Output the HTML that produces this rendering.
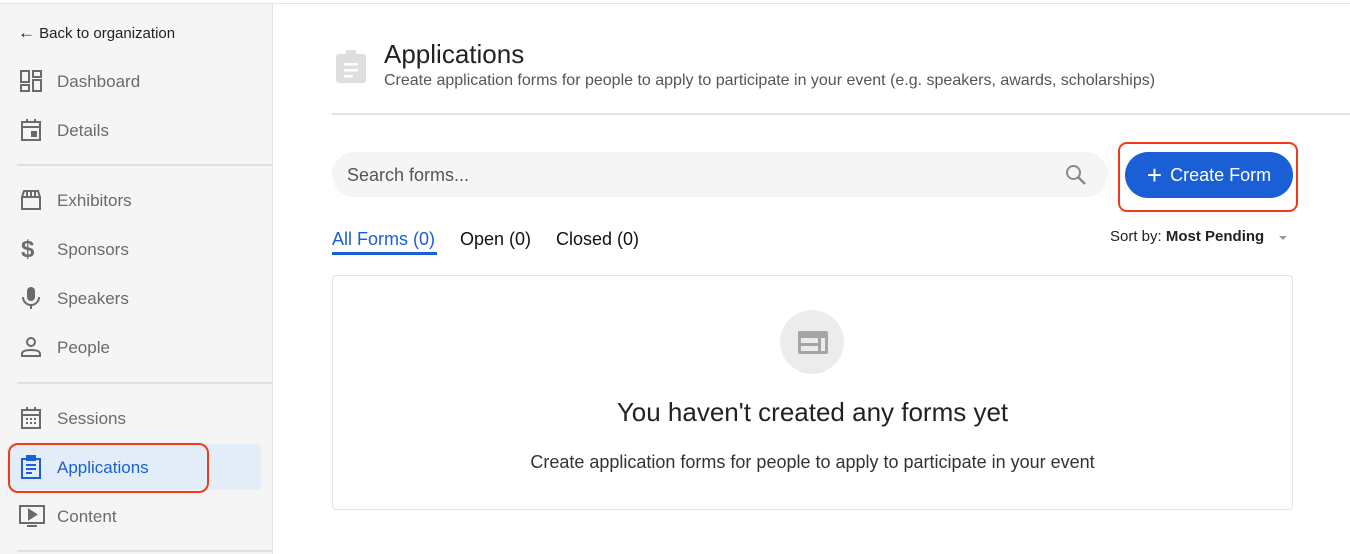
<!DOCTYPE html>
<html><head><style>
*{box-sizing:border-box;margin:0;padding:0}
body{width:1350px;height:554px;overflow:hidden;background:#fff;font-family:"Liberation Sans",sans-serif;position:relative}
.abs{position:absolute}
.side{left:0;top:4px;width:273px;height:550px;background:#f5f5f5;border-right:1px solid #e2e2e2}
.item{position:absolute;left:57px;font-size:17px;color:#6b6b6b;transform:translateY(-50%);margin-top:1px}
.ic{position:absolute;left:19px;width:24px;height:24px;transform:translateY(-50%)}
.div{position:absolute;left:17px;width:256px;height:2px;background:#e0e0e0}
</style></head><body>
<div class="abs" style="left:0;top:0;width:1350px;height:4px;border-bottom:1px solid #e6e6e6;background:#fff"></div>
<div class="abs side"></div>
<div class="abs" style="left:18px;top:23px;font-size:15px;color:#222"><span style="font-size:17px">←</span> Back to organization</div>

<svg class="ic" style="top:81px" viewBox="0 0 24 24" fill="none" stroke="#6b6b6b" stroke-width="2"><rect x="2" y="2" width="8" height="11"/><rect x="2" y="16" width="8" height="6"/><rect x="14" y="2" width="8" height="6"/><rect x="14" y="11" width="8" height="11"/></svg>
<div class="item" style="top:81px">Dashboard</div>
<svg class="ic" style="top:130px" viewBox="0 0 24 24" fill="none" stroke="#6b6b6b" stroke-width="2"><rect x="3" y="4" width="18" height="18"/><line x1="3" y1="9" x2="21" y2="9"/><line x1="8" y1="1" x2="8" y2="5"/><line x1="16" y1="1" x2="16" y2="5"/><rect x="13" y="14" width="4" height="4" fill="#6b6b6b"/></svg>
<div class="item" style="top:130px">Details</div>
<div class="div" style="top:164px"></div>
<svg class="ic" style="top:200px" viewBox="0 0 24 24" fill="none" stroke="#6b6b6b" stroke-width="2"><path d="M3 9 L5 3 H19 L21 9 V21 H3 Z M3 9 H21 M8 3 V9 M12 3 V9 M16 3 V9"/></svg>
<div class="item" style="top:200px">Exhibitors</div>
<div class="abs" style="left:21px;top:250px;transform:translateY(-50%);font-size:24px;color:#6b6b6b;font-weight:bold">$</div>
<div class="item" style="top:249px">Sponsors</div>
<svg class="ic" style="top:298px" viewBox="0 0 24 24" fill="#6b6b6b"><rect x="8" y="1" width="8" height="14" rx="4"/><path d="M4 11 a8 8 0 0 0 16 0" fill="none" stroke="#6b6b6b" stroke-width="2"/><rect x="11" y="18" width="2" height="5"/></svg>
<div class="item" style="top:298px">Speakers</div>
<svg class="ic" style="top:347px" viewBox="0 0 24 24" fill="none" stroke="#6b6b6b" stroke-width="2"><circle cx="12" cy="7" r="4"/><path d="M3 21 V19 Q3 15 12 15 Q21 15 21 19 V21 Z"/></svg>
<div class="item" style="top:347px">People</div>
<div class="div" style="top:382px"></div>
<svg class="ic" style="top:418px" viewBox="0 0 24 24" fill="none" stroke="#6b6b6b" stroke-width="2"><rect x="3" y="4" width="18" height="18"/><line x1="3" y1="9" x2="21" y2="9"/><line x1="8" y1="1" x2="8" y2="5"/><line x1="16" y1="1" x2="16" y2="5"/><g fill="#6b6b6b" stroke="none"><rect x="7" y="12" width="2" height="2"/><rect x="11" y="12" width="2" height="2"/><rect x="15" y="12" width="2" height="2"/><rect x="7" y="16" width="2" height="2"/><rect x="11" y="16" width="2" height="2"/><rect x="15" y="16" width="2" height="2"/></g></svg>
<div class="item" style="top:418px">Sessions</div>
<div class="abs" style="left:7px;top:444px;width:254px;height:46px;background:#e2edf8;border-radius:5px"></div>
<div class="abs" style="left:8px;top:443px;width:201px;height:50px;border:2.5px solid #f03c1c;border-radius:10px"></div>
<svg class="ic" style="top:467px" viewBox="0 0 24 24" fill="none" stroke="#1a5fd6" stroke-width="2"><rect x="3" y="4" width="18" height="19"/><rect x="8" y="1" width="8" height="4" fill="#1a5fd6"/><line x1="7" y1="10" x2="17" y2="10"/><line x1="7" y1="14" x2="17" y2="14"/><line x1="7" y1="18" x2="13" y2="18"/></svg>
<div class="item" style="top:467px;color:#1a5fd6">Applications</div>
<svg class="ic" style="top:516px;width:26px" viewBox="0 0 26 24" fill="none" stroke="#6b6b6b" stroke-width="2"><rect x="1" y="2" width="24" height="17"/><path d="M10 6 L17 10.5 L10 15 Z" fill="#6b6b6b"/><line x1="8" y1="22" x2="18" y2="22"/></svg>
<div class="item" style="top:516px">Content</div>
<div class="div" style="top:550px"></div>

<svg class="abs" style="left:336px;top:50px" width="30" height="33" viewBox="0 0 30 33"><rect x="0" y="4" width="30" height="29" rx="3" fill="#dedede"/><rect x="10" y="0" width="10" height="7" rx="2" fill="#dedede"/><rect x="8" y="13" width="14" height="2.5" fill="#fff"/><rect x="8" y="19" width="14" height="2.5" fill="#fff"/><rect x="8" y="25" width="9" height="2.5" fill="#fff"/></svg>
<div class="abs" style="left:384px;top:39px;font-size:26px;color:#222">Applications</div>
<div class="abs" style="left:384px;top:72px;font-size:16px;color:#555">Create application forms for people to apply to participate in your event (e.g. speakers, awards, scholarships)</div>
<div class="abs" style="left:332px;top:113px;width:1018px;height:2px;background:#e3e3e3"></div>

<div class="abs" style="left:332px;top:152px;width:776px;height:45px;background:#f5f5f5;border-radius:23px"></div>
<div class="abs" style="left:347px;top:165px;font-size:18px;color:#555">Search forms...</div>
<svg class="abs" style="left:1065px;top:164px" width="22" height="22" viewBox="0 0 22 22" fill="none" stroke="#8a8a8a" stroke-width="2"><circle cx="8.5" cy="8.5" r="6.5"/><line x1="13.5" y1="13.5" x2="20" y2="20" stroke-width="2.5"/></svg>
<div class="abs" style="left:1118px;top:142px;width:180px;height:70px;border:2.5px solid #f03c1c;border-radius:9px"></div>
<div class="abs" style="left:1125px;top:152px;width:168px;height:46px;background:#1a5fd6;border-radius:23px;color:#fff;font-size:18px;line-height:46px;text-align:center"><span style="font-size:26px;vertical-align:-3px;margin-right:8px">+</span>Create Form</div>

<div class="abs" style="left:332px;top:229px;font-size:18px;color:#1a5fd6">All Forms (0)</div>
<div class="abs" style="left:332px;top:252px;width:105px;height:3px;background:#1a5fd6"></div>
<div class="abs" style="left:460px;top:229px;font-size:18px;color:#111">Open (0)</div>
<div class="abs" style="left:556px;top:229px;font-size:18px;color:#111">Closed (0)</div>
<div class="abs" style="left:1110px;top:228px;font-size:15px;color:#222">Sort by: <b>Most Pending</b></div>
<div class="abs" style="left:1279px;top:236px;width:0;height:0;border-left:4px solid transparent;border-right:4px solid transparent;border-top:4px solid #999"></div>

<div class="abs" style="left:332px;top:275px;width:961px;height:235px;border:1px solid #e3e3e3;border-radius:4px"></div>
<div class="abs" style="left:780px;top:310px;width:64px;height:64px;border-radius:50%;background:#ececec"></div>
<svg class="abs" style="left:798px;top:331px" width="30" height="23" viewBox="0 0 30 23"><rect width="30" height="23" rx="2" fill="#a5a5a5"/><rect x="3" y="7" width="17" height="5" fill="#ececec"/><rect x="3" y="15" width="17" height="5" fill="#ececec"/><rect x="23" y="7" width="4" height="13" fill="#ececec"/></svg>
<div class="abs" style="left:332px;top:397px;width:961px;text-align:center;font-size:26px;color:#222">You haven't created any forms yet</div>
<div class="abs" style="left:332px;top:452px;width:961px;text-align:center;font-size:18px;color:#333">Create application forms for people to apply to participate in your event</div>
</body></html>
